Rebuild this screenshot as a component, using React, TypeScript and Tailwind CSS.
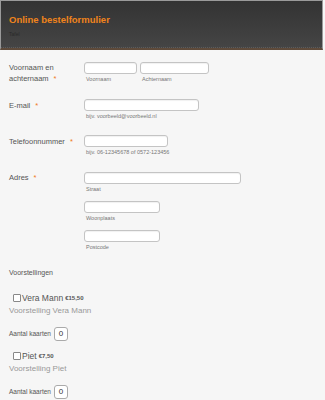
const font = "font-['Liberation_Sans',Arial,sans-serif]";

const Req = () => <span className="ml-[5px] text-[#f07a1c]">*</span>;

type FieldProps = {
  width: string;
  hint?: string;
};

const Field: React.FC<FieldProps> = ({ width, hint }) => (
  <div className="flex flex-col">
    <div className={`h-[12px] ${width} rounded-[3px] border border-[#c4c4c4] bg-white shadow-[inset_0_1px_1px_rgba(0,0,0,0.06)]`} />
    {hint && <span className="mt-[1px] ml-[2px] text-[5.5px] leading-[8px] text-[#777]">{hint}</span>}
  </div>
);

const Show: React.FC<{ name: string; price: string; desc: string }> = ({ name, price, desc }) => (
  <div className="flex flex-col">
    <div className="flex items-center pl-[4px]">
      <span className="h-[8px] w-[8px] rounded-[1px] border border-[#888] bg-white" />
      <span className="ml-[1px] text-[8.5px] leading-[12px] text-[#555]">{name}</span>
      <span className="ml-[2px] text-[6px] font-bold text-[#555]">{price}</span>
    </div>
    <span className="mt-[1px] text-[8px] leading-[12px] text-[#999]">{desc}</span>
    <div className="mt-[10px] flex items-center">
      <span className="text-[6.5px] text-[#555]">Aantal kaarten</span>
      <span className="ml-[3px] flex h-[14px] w-[14px] items-center justify-center rounded-[3px] border border-[#aaa] bg-white text-[8px] text-[#333]">
        0
      </span>
    </div>
  </div>
);

export default function App() {
  return (
    <div className={`${font} h-[400px] w-[325px] overflow-hidden bg-[#f6f6f6]`}>
      <div className="mr-[2px] border-l border-t border-r border-[#9a9a9a] border-b-[2px] border-b-[#5e4a3a] bg-gradient-to-b from-[#333333] to-[#454545]">
        <div className="h-[47px] border-b border-dotted border-b-[#5c5c5c] pl-[8px] pt-[13px]">
          <h1 className="text-[9.5px] font-bold leading-[11px] text-[#f0841c]">Online bestelformulier</h1>
          <p className="mt-[6px] text-[5px] text-[#2a2a2a]">Tafel</p>
        </div>
      </div>

      <div className="pl-[9px] pt-[12px] text-[7.5px] text-[#555]">
        <div className="flex">
          <div className="w-[75px] leading-[11px]">
            Voornaam en
            <br />
            achternaam
            <Req />
          </div>
          <div className="flex gap-[3px]">
            <Field width="w-[53px]" hint="Voornaam" />
            <Field width="w-[69px]" hint="Achternaam" />
          </div>
        </div>

        <div className="mt-[15px] flex">
          <div className="w-[75px] pt-[1px] leading-[11px]">
            E-mail
            <Req />
          </div>
          <Field width="w-[115px]" hint="bijv. voorbeeld@voorbeeld.nl" />
        </div>

        <div className="mt-[15px] flex">
          <div className="w-[75px] pt-[1px] leading-[11px]">
            Telefoonnummer
            <Req />
          </div>
          <Field width="w-[84px]" hint="bijv. 06-12345678 of 0572-123456" />
        </div>

        <div className="mt-[16px] flex">
          <div className="w-[75px] leading-[11px]">
            Adres
            <Req />
          </div>
          <div className="flex flex-col gap-[8px]">
            <Field width="w-[157px]" hint="Straat" />
            <Field width="w-[76px]" hint="Woonplaats" />
            <Field width="w-[76px]" hint="Postcode" />
          </div>
        </div>

        <div className="mt-[17px] text-[7px] leading-[10px]">Voorstellingen</div>

        <div className="mt-[14px] flex flex-col gap-[9px]">
          <Show name="Vera Mann" price="€15,50" desc="Voorstelling Vera Mann" />
          <Show name="Piet" price="€7,50" desc="Voorstelling Piet" />
        </div>
      </div>
    </div>
  );
}
